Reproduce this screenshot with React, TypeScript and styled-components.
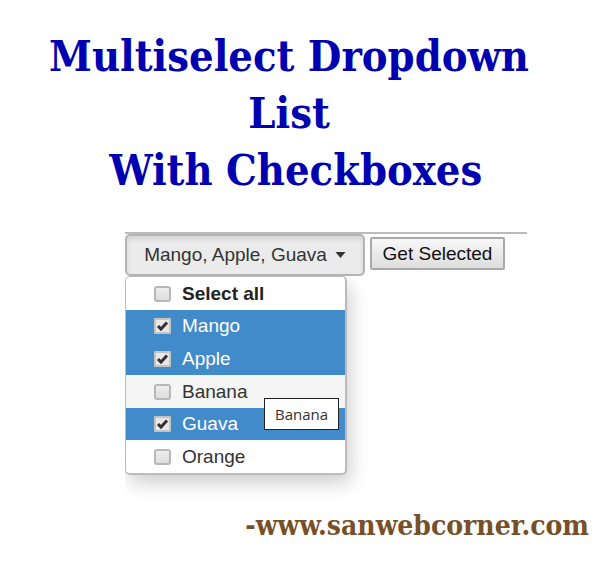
import React, { useState } from "react";
import styled, { createGlobalStyle } from "styled-components";

const GlobalStyle = createGlobalStyle`
  * { box-sizing: border-box; }
  body { margin: 0; background: #fff; font-family: "Liberation Sans", Arial, sans-serif; }
`;

const Page = styled.main`
  display: flex;
  flex-direction: column;
  padding: 28px 11px 20px 0;
`;

const Title = styled.h1`
  margin: 0 0 33px;
  padding-right: 11px;
  color: #0000b0;
  font: bold 43px/57px "DejaVu Serif Condensed", "DejaVu Serif", serif;
  text-align: center;
`;

const Demo = styled.section`
  margin: 0 62px 0 125px;
  padding-bottom: 35px;
  border-top: 2px solid #bbb;
`;

const Toolbar = styled.div`
  display: flex;
  align-items: flex-start;
  gap: 5px;
`;

const Toggle = styled.button`
  display: flex;
  align-items: center;
  justify-content: center;
  gap: 8px;
  width: 240px;
  height: 42px;
  padding: 0;
  border: 2px solid #b4b4b4;
  border-radius: 5px;
  background: #ebebeb;
  box-shadow: inset 0 3px 5px rgba(0, 0, 0, 0.1);
  color: #333;
  font: 19px/24px "Liberation Sans", Arial, sans-serif;
  white-space: nowrap;
`;

const Caret = styled.svg`
  width: 11px;
  height: 6px;
  fill: #333;
`;

const Submit = styled.button`
  width: 135px;
  height: 33px;
  margin-top: 3px;
  padding: 0;
  border: 2px solid #a9a9a9;
  border-radius: 2px;
  background: linear-gradient(#f7f7f7, #dedede);
  color: #111;
  font: 19px/24px "Liberation Sans", Arial, sans-serif;
  white-space: nowrap;
`;

const Menu = styled.ul`
  position: relative;
  display: grid;
  grid-template-rows: repeat(6, 1fr);
  width: 222px;
  height: 199px;
  margin: 0;
  padding: 0;
  list-style: none;
  border: 1px solid #bbb;
  border-right-width: 2px;
  border-bottom-width: 2px;
  border-radius: 5px;
  background: #fff;
  box-shadow: 4px 9px 18px rgba(0, 0, 0, 0.18);
  clip-path: inset(0 -40px -40px 0);
`;

const Option = styled.label<{ $active: boolean; $hover?: boolean; $bold?: boolean }>`
  display: flex;
  align-items: center;
  gap: 11px;
  height: 100%;
  padding: 1px 0 0 28px;
  background: ${(p) => (p.$active ? "#428bca" : p.$hover ? "#f5f5f5" : "transparent")};
  color: ${(p) => (p.$active ? "#fff" : p.$bold ? "#222" : "#333")};
  font-size: 19px;
  font-weight: ${(p) => (p.$bold ? "bold" : "normal")};
  line-height: 24px;
`;

const Box = styled.input`
  appearance: none;
  width: 17px;
  height: 16px;
  margin: 0;
  border: 2px solid #b8b8b8;
  border-radius: 3px;
  background: linear-gradient(#eee, #ddd);
  &:checked {
    border-color: #c4c4c4;
    border-radius: 1px;
    background: #e8e8e8;
  }
`;

const BoxWrap = styled.span`
  position: relative;
  display: flex;
`;

const Tick = styled.svg`
  position: absolute;
  inset: 0;
  width: 17px;
  height: 16px;
  pointer-events: none;
`;

const Tooltip = styled.div`
  position: absolute;
  top: 121px;
  left: 138px;
  padding: 4px 10px;
  border: 1px solid #222;
  background: #fff;
  color: #333;
  font: 15px/22px "Open Sans", "Noto Sans", sans-serif;
`;

const Footer = styled.footer`
  text-align: right;
`;

const Site = styled.a`
  color: #77502a;
  font: bold 28px/32px "DejaVu Serif Condensed", "DejaVu Serif", serif;
  text-decoration: none;
`;

const fruits = ["Mango", "Apple", "Banana", "Guava", "Orange"];

type CheckProps = { checked: boolean; onChange: () => void };

const Check = ({ checked, onChange }: CheckProps) => (
  <BoxWrap>
    <Box type="checkbox" checked={checked} onChange={onChange} />
    {checked && (
      <Tick viewBox="0 0 17 16" aria-hidden="true">
        <path d="M4 8 L7 11 L13 4.5" fill="none" stroke="#333" strokeWidth="3" />
      </Tick>
    )}
  </BoxWrap>
);

export default function App() {
  const [selected, setSelected] = useState(["Mango", "Apple", "Guava"]);
  const all = selected.length === fruits.length;
  const toggle = (name: string) =>
    setSelected(fruits.filter((f) => (f === name ? !selected.includes(f) : selected.includes(f))));

  return (
    <>
      <GlobalStyle />
      <Page>
        <Title>
          Multiselect Dropdown
          <br />
          List
          <br />
          &nbsp;With Checkboxes
        </Title>
        <Demo>
          <Toolbar>
            <Toggle type="button" aria-expanded="true">
              {selected.join(", ") || "None selected"}
              <Caret viewBox="0 0 10 6" aria-hidden="true">
                <path d="M0 0H10L5 6Z" />
              </Caret>
            </Toggle>
            <Submit type="button">Get Selected</Submit>
          </Toolbar>
          <Menu>
            <li>
              <Option $active={false} $bold>
                <Check checked={all} onChange={() => setSelected(all ? [] : fruits)} />
                Select all
              </Option>
            </li>
            {fruits.map((name) => (
              <li key={name}>
                <Option $active={selected.includes(name)} $hover={name === "Banana"}>
                  <Check checked={selected.includes(name)} onChange={() => toggle(name)} />
                  {name}
                </Option>
              </li>
            ))}
            <Tooltip as="li" role="tooltip">Banana</Tooltip>
          </Menu>
        </Demo>
        <Footer>
          <Site href="#">-www.sanwebcorner.com</Site>
        </Footer>
      </Page>
    </>
  );
}
